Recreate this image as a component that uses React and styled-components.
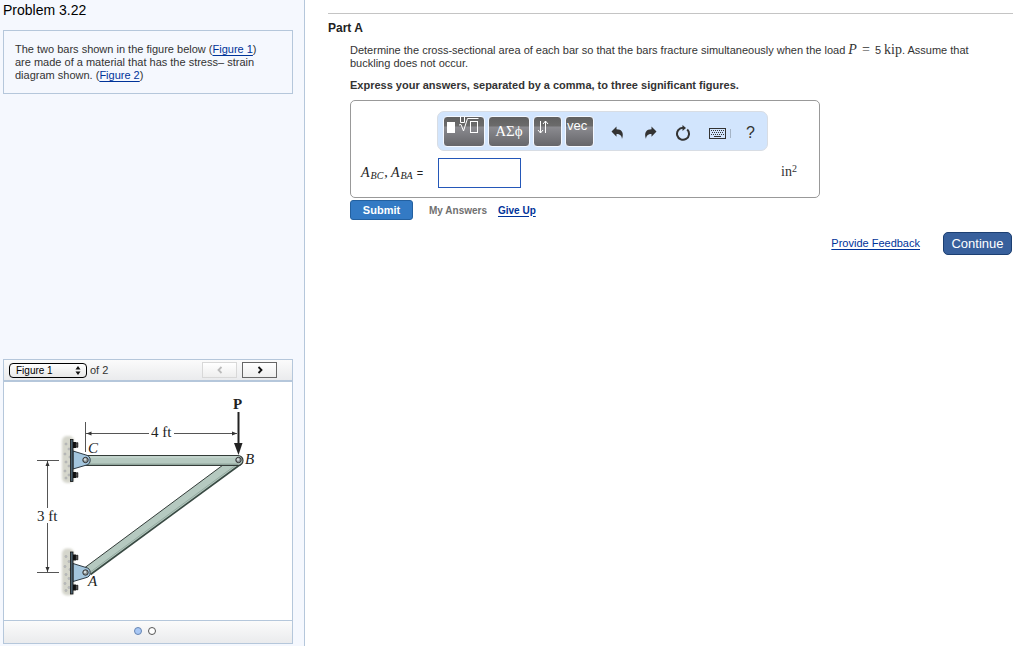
import React, { useState } from "react";
import styled, { createGlobalStyle, css } from "styled-components";

const sans = '"Liberation Sans", Arial, Helvetica, sans-serif';
const serif = '"Liberation Serif", "Times New Roman", serif';

const GlobalStyle = createGlobalStyle`
  *, *::before, *::after { box-sizing: border-box; }
  body {
    margin: 0;
    background: #fff;
    color: #333;
    font: 11px/13px ${sans};
  }
  button, select, input { font-family: inherit; }
  h1, h2, p { margin: 0; }
`;

const Page = styled.div`
  display: flex;
  min-height: 100vh;
`;

const Sidebar = styled.aside`
  flex: none;
  display: flex;
  flex-direction: column;
  width: 305px;
  padding: 2px 11px 2px 3px;
  background: #f5f8fe;
  border-right: 1px solid #b5c7db;
`;

const ProblemTitle = styled.h1`
  font-size: 14px;
  line-height: 16px;
  font-weight: normal;
  color: #000;
`;

const Statement = styled.p`
  margin-top: 12px;
  padding: 12px 20px 11px 11px;
  border: 1px solid #b5c7db;
`;

const Link = styled.a`
  color: #003399;
  text-decoration: underline;
  text-underline-offset: 2px;
  font-weight: ${(p) => (p.$bold ? "bold" : "inherit")};
`;

const FigurePanel = styled.section`
  margin-top: auto;
  border: 1px solid #b5c7db;
  background: #fff;
`;

const bar = css`
  display: flex;
  align-items: center;
  background: linear-gradient(#fbfbfb, #eaebed);
`;

const FigureBar = styled.header`
  ${bar}
  height: 22px;
  padding: 0 15px 0 5px;
  border-bottom: 2px solid #b5c7db;
`;

const SelectWrap = styled.label`
  position: relative;
  display: flex;
`;

const FigureSelect = styled.select`
  appearance: none;
  width: 78px;
  height: 15px;
  padding: 0 6px;
  border: 1px solid #000;
  border-radius: 4px;
  background: linear-gradient(#fff, #e8e8e8);
  color: #000;
  font-size: 10px;
  line-height: 13px;
`;

const SelectArrows = styled.svg`
  position: absolute;
  right: 6px;
  top: 3px;
  pointer-events: none;
`;

const FigureCount = styled.span`
  margin-left: 3px;
`;

const Pager = styled.div`
  display: flex;
  gap: 5px;
  margin-left: auto;
`;

const PagerButton = styled.button`
  display: flex;
  align-items: center;
  justify-content: center;
  width: 35px;
  height: 16px;
  padding: 0;
  border: 1px solid #666;
  background: linear-gradient(#fff, #eee);
  color: #111;

  &:disabled {
    border-color: #d8d8d8;
    color: #bbb;
  }
`;

const Drawing = styled.svg`
  display: block;
  width: 100%;
  height: auto;
`;

const DotBar = styled.footer`
  ${bar}
  justify-content: center;
  gap: 6px;
  height: 23px;
  padding: 0 6px 2px 0;
  border-top: 1px solid #b5c7db;
`;

const Dot = styled.input.attrs({ type: "radio" })`
  appearance: none;
  width: 8px;
  height: 8px;
  margin: 0;
  border: 1px solid #555;
  border-radius: 50%;
  background: #fff;

  &:checked {
    border-color: #6886b3;
    background: #a9c8f5;
  }
`;

const Main = styled.main`
  flex: 1;
  min-width: 0;
  padding: 13px 11px 20px 23px;
`;

const Part = styled.section`
  border-top: 1px solid #c4c4c4;
  padding-top: 7px;
`;

const PartTitle = styled.h2`
  font-size: 12px;
  line-height: 14px;
  color: #222;
`;

const PartBody = styled.div`
  padding: 9px 20px 0 22px;
`;

const Instruction = styled.p`
  margin-top: 9px;
  font-weight: bold;
`;

const MathText = styled.span`
  margin: 0 ${(p) => (p.$operator ? 2 : 0)}px;
  font-family: ${serif};
  font-size: 14px;
  font-style: ${(p) => (p.$italic ? "italic" : "normal")};
  line-height: 1px;
`;

const AnswerBox = styled.form`
  max-width: 470px;
  margin-top: 8px;
  padding: 10px 20px 9px 10px;
  border: 1px solid #999;
  border-radius: 5px;
`;

const Toolbar = styled.div`
  display: flex;
  align-items: center;
  width: 331px;
  height: 40px;
  margin-left: 76px;
  padding: 0 10px 0 5px;
  gap: 3px;
  border: 1px solid #d8dde4;
  border-radius: 7px;
  background: #d2e5fd;
`;

const MathButton = styled.button`
  display: flex;
  flex: none;
  justify-content: ${(p) => (p.$start ? "flex-start" : "center")};
  align-items: ${(p) => (p.$top ? "flex-start" : "center")};
  width: ${(p) => (p.$wide ? 42 : 29)}px;
  height: 31px;
  padding: 0 1px;
  border: 1px solid #f4f8ff;
  border-radius: 4px;
  background: linear-gradient(#606060 0, #6b6b6b 9px, #8b8b90 10px, #66666a 100%);
  color: #fff;
  font-family: ${(p) => (p.$greek ? serif : sans)};
  font-size: ${(p) => (p.$greek ? 15 : 13)}px;
  line-height: 17px;
`;

const IconGroup = styled.div`
  display: flex;
  flex: 1;
  align-items: center;
  gap: 18px;
  padding: 4px 0 0 14px;
`;

const IconButton = styled.button`
  display: flex;
  flex: none;
  align-items: center;
  justify-content: center;
  height: 18px;
  padding: 0;
  border: 0;
  background: none;
  color: #333;
  font-size: 16px;
  line-height: 18px;

  &:last-child {
    margin: 0 0 0 -4px;
  }
`;

const AnswerRow = styled.div`
  display: flex;
  align-items: center;
  margin-top: 7px;
`;

const AnswerLabel = styled.label`
  width: 77px;
  color: #222;

  sub {
    margin: 0 1px;
    font-size: 10px;
    vertical-align: -2px;
  }
`;

const AnswerInput = styled.input`
  width: 83px;
  height: 30px;
  border: 1px solid #2457b8;
  background: #fff;
  font-size: 12px;
`;

const Unit = styled.span`
  margin-left: auto;
  padding: 0 2px 4px 0;
  font-family: ${serif};
  font-size: 14px;

  sup {
    font-size: 10px;
    line-height: 1px;
    vertical-align: 4px;
  }
`;

const SubmitRow = styled.div`
  display: flex;
  align-items: center;
  margin-top: 2px;
`;

const SubmitButton = styled.button`
  width: 63px;
  height: 20px;
  padding: 0;
  border: 1px solid #23609f;
  border-radius: 3px;
  background: #337ac4;
  color: #fff;
  font-size: 11px;
  font-weight: bold;
`;

const MyAnswers = styled.span`
  margin: 0 11px 0 16px;
  color: #707070;
  font-weight: bold;
  font-size: 10px;
`;

const GiveUp = styled(Link)`
  font-size: 10px;
`;

const PageFooter = styled.div`
  display: flex;
  align-items: center;
  justify-content: flex-end;
  gap: 23px;
  margin-top: 12px;
  padding-right: 1px;
`;

const ContinueButton = styled.button`
  width: 69px;
  height: 23px;
  padding: 0;
  border: 1px solid #1c3f72;
  border-radius: 5px;
  background: #38609c;
  color: #fff;
  font-size: 13px;
`;

function Chevron({ left }) {
  return (
    <svg width="6" height="8" viewBox="0 0 6 8" aria-hidden="true">
      <path
        d={left ? "M4.5 1L1.5 4L4.5 7" : "M1.5 1L4.5 4L1.5 7"}
        fill="none"
        stroke="currentColor"
        strokeWidth="1.8"
      />
    </svg>
  );
}

function Support({ y }) {
  return (
    <g transform={`translate(0 ${y})`}>
      <rect x="62" y="-24" width="12" height="47" rx="5" fill="#d5d6cc" filter="url(#soft)" />
      {[[66, -16], [69, -11], [65, -6], [70, -3], [66, 2], [69, 6], [65, 11], [69, 15], [66, 18]].map(([x, cy]) => (
        <circle key={`${x}-${cy}`} cx={x} cy={cy} r="1.1" fill="#bfc1c4" stroke="#999b9b" strokeWidth=".4" />
      ))}
      {[-15, 15].map((b) => (
        <g key={b} transform={`translate(0 ${b})`}>
          <path d="M73 -3h3v6h-3z" fill="#111" />
          <path d="M75.500 -2l2.300 -.3v4.600l-2.300 -.3z" fill="#555" stroke="#111" strokeWidth=".8" />
        </g>
      ))}
      <path d="M73 -9L86 -5A5.200 5.200 0 0 1 86 5.200L73 9z" fill="#a3c5dd" stroke="#303c45" strokeWidth="1" />
      <rect x="70.500" y="-20.500" width="2.500" height="42" fill="#4b6270" stroke="#111" strokeWidth=".8" />
    </g>
  );
}

function Pin({ x, y }) {
  return (
    <g>
      <circle cx={x} cy={y} r="2.700" fill="#8d9699" stroke="#333" strokeWidth="1" />
      <circle cx={x - 0.5} cy={y - 0.5} r="1.200" fill="#d5dcdc" />
    </g>
  );
}

function TrussFigure() {
  const label = { fontFamily: serif, fill: "#222" };
  return (
    <Drawing viewBox="4 382 288 238" role="img" aria-label="Two bars BC and BA loaded by force P at B">
      <defs>
        <filter id="soft" x="-30%" y="-10%" width="160%" height="120%">
          <feGaussianBlur stdDeviation="1.2" />
        </filter>
      </defs>
      <g stroke="#555" strokeWidth="1" fill="none">
        <path d="M85.500 422V452M86 433.500H149M174 433.500H237M37 460.500H59M37 572.500H59M47.500 461V508M47.500 523V572" />
      </g>
      <g fill="#333">
        <path d="M86.500 433.500l5-2v4zM237 433.500l-5-2v4zM47.500 461l-2 5h4zM47.500 572l-2-5h4z" />
      </g>
      <path d="M85 567.500L223 465L241 464L90.500 574.500z" fill="#b5c9c0" />
      <path d="M85 567.500L223 465" stroke="#343c39" strokeWidth="1" />
      <path d="M90.500 574.500L241 464" stroke="#394a43" strokeWidth="1.600" />
      <path d="M89 573L236 465" stroke="#94aaa0" strokeWidth="1" />
      <path d="M85 455.500H238A5 5 0 0 1 238 465.500H85z" fill="#b5c9c0" stroke="#343c39" strokeWidth="1.200" />
      <path d="M87 457H237" stroke="#cfddd7" />
      <path d="M87 464.200H238" stroke="#7e948a" />
      <Support y={460} />
      <Support y={572.5} />
      <Pin x={85.5} y={460} />
      <Pin x={85.5} y={572.5} />
      <Pin x={238.5} y={460} />
      <path d="M238.500 412V446" stroke="#222" strokeWidth="2" />
      <path d="M234 443h8.500L238.500 455z" fill="#222" />
      <text x="233" y="409" {...label} fontSize="15" fontWeight="bold">P</text>
      <text x="151" y="437" {...label} fontSize="15">4 ft</text>
      <text x="37" y="521" {...label} fontSize="15">3 ft</text>
      <text x="88" y="453" {...label} fontSize="15" fontStyle="italic">C</text>
      <text x="245" y="464" {...label} fontSize="15" fontStyle="italic">B</text>
      <text x="88" y="586" {...label} fontSize="15" fontStyle="italic">A</text>
    </Drawing>
  );
}

export default function App() {
  const [figure, setFigure] = useState(1);
  const [answer, setAnswer] = useState("");

  return (
    <>
      <GlobalStyle />
      <Page>
        <Sidebar>
          <ProblemTitle>Problem 3.22</ProblemTitle>
          <Statement>
            The two bars shown in the figure below (<Link href="#figure">Figure 1</Link>) are made of a
            material that has the stress– strain diagram shown. (<Link href="#figure">Figure 2</Link>)
          </Statement>
          <FigurePanel id="figure">
            <FigureBar>
              <SelectWrap>
                <FigureSelect
                  aria-label="Figure"
                  value={figure}
                  onChange={(e) => setFigure(Number(e.target.value))}
                >
                  <option value={1}>Figure 1</option>
                  <option value={2}>Figure 2</option>
                </FigureSelect>
                <SelectArrows width="6" height="9" viewBox="0 0 6 9" aria-hidden="true">
                  <path d="M3 0L5.500 3.500H.5zM3 9L.5 5.500H5.500z" fill="#111" />
                </SelectArrows>
              </SelectWrap>
              <FigureCount>of 2</FigureCount>
              <Pager>
                <PagerButton aria-label="Previous figure" disabled={figure === 1} onClick={() => setFigure(1)}>
                  <Chevron left />
                </PagerButton>
                <PagerButton aria-label="Next figure" disabled={figure === 2} onClick={() => setFigure(2)}>
                  <Chevron />
                </PagerButton>
              </Pager>
            </FigureBar>
            <TrussFigure />
            <DotBar>
              {[1, 2].map((n) => (
                <Dot
                  key={n}
                  name="figure-dot"
                  aria-label={`Figure ${n}`}
                  checked={figure === n}
                  onChange={() => setFigure(n)}
                />
              ))}
            </DotBar>
          </FigurePanel>
        </Sidebar>

        <Main>
          <Part>
            <PartTitle>Part A</PartTitle>
            <PartBody>
              <p>
                Determine the cross-sectional area of each bar so that the bars fracture simultaneously when
                the load <MathText $italic>P</MathText> <MathText $operator>=</MathText> 5{" "}
                <MathText>kip</MathText>. Assume that buckling does not occur.
              </p>
              <Instruction>Express your answers, separated by a comma, to three significant figures.</Instruction>
              <AnswerBox onSubmit={(e) => e.preventDefault()}>
                <Toolbar role="toolbar" aria-label="Equation tools">
                  <MathButton type="button" $wide $top aria-label="Templates">
                    <svg width="36" height="20" viewBox="0 0 36 20" fill="none" stroke="#fff">
                      <rect x="1" y="5" width="8" height="11" fill="#fff" stroke="none" />
                      <path d="M14.500 0V5.500H18.500V0" />
                      <path d="M13 8L15 7.500L17.500 14L21.500 1.500H32.500" />
                      <rect x="24.500" y="4.500" width="7" height="11" />
                    </svg>
                  </MathButton>
                  <MathButton type="button" $wide $greek>ΑΣϕ</MathButton>
                  <MathButton type="button" $top $start aria-label="Subscript and superscript">
                    <svg width="20" height="20" viewBox="0 0 20 20" fill="none" stroke="#fff">
                      <path d="M5.500 4V16M3 13L5.500 16L8 13M10.500 16V4M8 7L10.500 4L13 7" />
                    </svg>
                  </MathButton>
                  <MathButton type="button" $top $start>vec</MathButton>
                  <IconGroup>
                    <IconButton type="button" aria-label="Undo">
                      <svg width="14" height="14" viewBox="0 0 14 14" fill="currentColor">
                        <path d="M5.500 .5V3.300C10.500 3.300 13.300 6.500 11 13C10.700 9.500 9 8 5.500 8V10.800L.5 5.600z" />
                      </svg>
                    </IconButton>
                    <IconButton type="button" aria-label="Redo">
                      <svg width="14" height="14" viewBox="0 0 14 14" fill="currentColor">
                        <path d="M8.500 .5V3.300C3.500 3.300 .7 6.500 3 13C3.300 9.500 5 8 8.500 8V10.800L13.500 5.600z" />
                      </svg>
                    </IconButton>
                    <IconButton type="button" aria-label="Reset">
                      <svg width="16" height="16" viewBox="0 0 16 16">
                        <path d="M12.200 4.500A6 6 0 1 1 8 2.800" fill="none" stroke="currentColor" strokeWidth="2" />
                        <path d="M7.500 0L11 3L7.500 6z" fill="currentColor" />
                      </svg>
                    </IconButton>
                    <IconButton type="button" aria-label="Keyboard shortcuts">
                      <svg width="23" height="11" viewBox="0 0 23 11" fill="none" stroke="currentColor">
                        <rect x=".5" y=".5" width="16" height="10" />
                        <path d="M2 2.500H15M3 4.500H15M2 6.500H15" strokeDasharray="1 1" />
                        <path d="M5 8.500H12" />
                        <path d="M21.500 1V10" stroke="#a5b4c6" />
                      </svg>
                    </IconButton>
                    <IconButton type="button" aria-label="Help">?</IconButton>
                  </IconGroup>
                </Toolbar>
                <AnswerRow>
                  <AnswerLabel htmlFor="answer">
                    <MathText $italic>A<sub>BC</sub></MathText><MathText>,</MathText>{" "}
                    <MathText $italic>A<sub>BA</sub></MathText> =
                  </AnswerLabel>
                  <AnswerInput id="answer" value={answer} onChange={(e) => setAnswer(e.target.value)} />
                  <Unit>in<sup>2</sup></Unit>
                </AnswerRow>
              </AnswerBox>
              <SubmitRow>
                <SubmitButton type="button">Submit</SubmitButton>
                <MyAnswers>My Answers</MyAnswers>
                <GiveUp $bold href="#give-up">Give Up</GiveUp>
              </SubmitRow>
            </PartBody>
          </Part>
          <PageFooter>
            <Link href="#feedback">Provide Feedback</Link>
            <ContinueButton type="button">Continue</ContinueButton>
          </PageFooter>
        </Main>
      </Page>
    </>
  );
}
